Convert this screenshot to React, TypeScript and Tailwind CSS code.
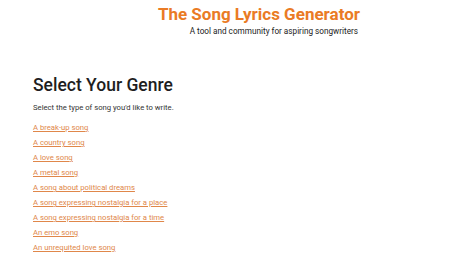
import React from "react";

const links = [
  "A break-up song",
  "A country song",
  "A love song",
  "A metal song",
  "A song about political dreams",
  "A song expressing nostalgia for a place",
  "A song expressing nostalgia for a time",
  "An emo song",
  "An unrequited love song",
];

export default function App() {
  return (
    <div className="w-[474px] h-[277px] overflow-hidden bg-white" style={{ fontFamily: "Roboto, 'Liberation Sans', sans-serif" }}>
      <header className="w-[360px] flex flex-col items-end pt-[4px]">
        <h1 className="text-[17px] leading-[20px] font-bold text-[#ea7b25]">The Song Lyrics Generator</h1>
        <p className="text-[8.2px] leading-[10px] text-[#222] mr-[2px] mt-[2px]">A tool and community for aspiring songwriters</p>
      </header>
      <main className="pl-[33px] pt-[39px]">
        <h2 className="text-[17.5px] leading-[20px] font-medium text-[#1e1e1e]">Select Your Genre</h2>
        <p className="text-[7.7px] leading-[10px] text-[#333] mt-[8px]">Select the type of song you'd like to write.</p>
        <ul className="mt-[7px] flex flex-col">
          {links.map((l) => (
            <li key={l} className="h-[15px] leading-[10px]">
              <a href="#" className="text-[7.7px] text-[#e0874a] underline">{l}</a>
            </li>
          ))}
        </ul>
      </main>
    </div>
  );
}
